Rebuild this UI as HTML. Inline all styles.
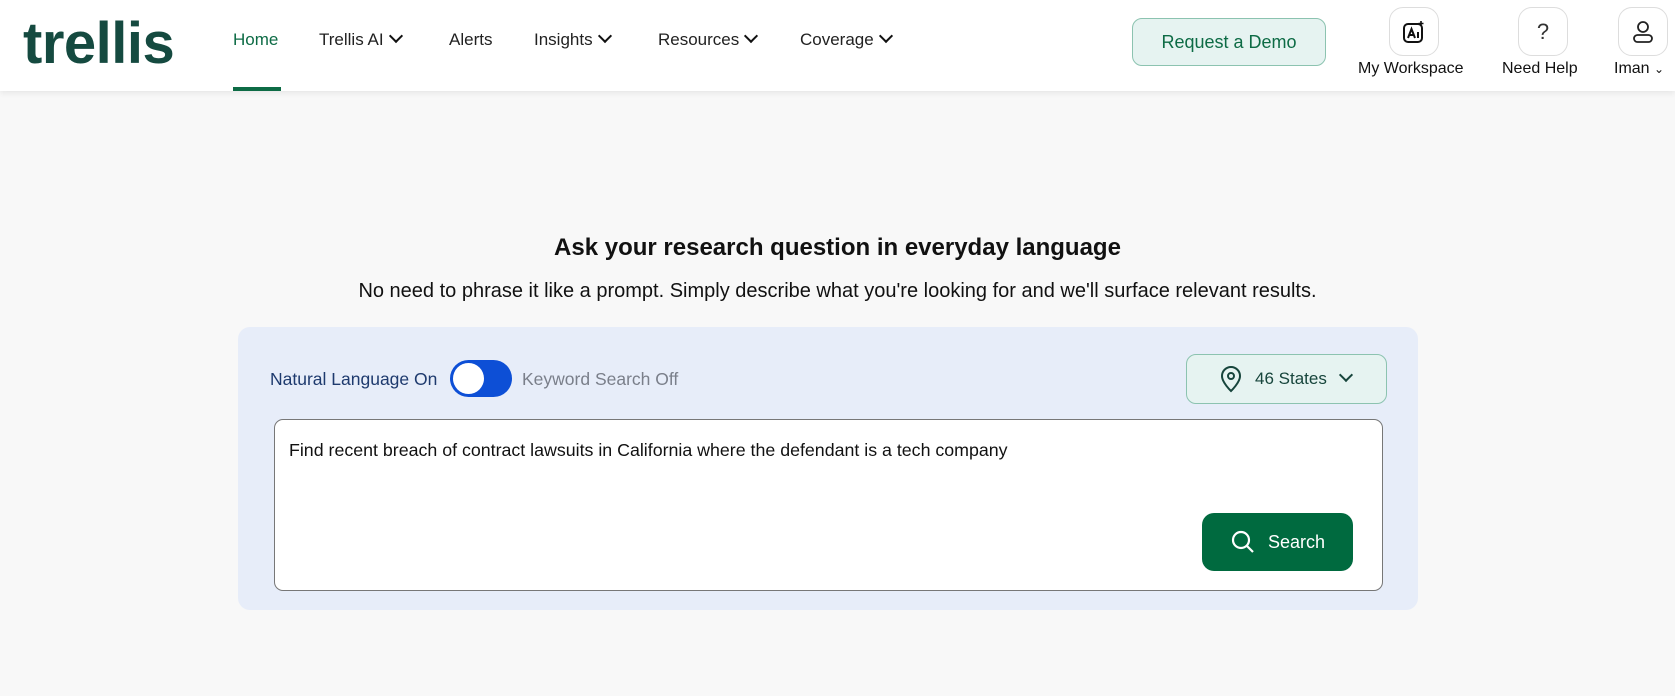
<!DOCTYPE html>
<html><head><meta charset="utf-8"><style>
*{box-sizing:border-box;margin:0;padding:0}
body{width:1675px;height:696px;background:#f8f8f8;font-family:"Liberation Sans",sans-serif;position:relative;overflow:hidden;color:#111}
.hdr{position:absolute;left:0;top:0;width:1675px;height:91px;background:#fff;box-shadow:0 2px 6px rgba(0,0,0,.08)}
.a{position:absolute}
.logo{left:23px;top:10px;font-size:58px;font-weight:bold;color:#154a40;letter-spacing:-0.5px}
.nav{top:30px;font-size:17px;color:#222}
.chev{display:inline-block;width:10px;height:10px;border-right:2px solid #111;border-bottom:2px solid #111;transform:rotate(45deg);margin-left:7px;position:relative;top:-4px}
.demo{left:1132px;top:18px;width:194px;height:48px;border:1px solid #8cc3b0;background:#e6f3f1;border-radius:10px;color:#0d6b45;font-size:18px;text-align:center;line-height:46px}
.ic{width:50px;height:49px;border:1px solid #ddd;border-radius:14px;background:#fff;display:flex;align-items:center;justify-content:center}
.lbl{top:60px;font-size:16px;color:#111}
.panel{left:238px;top:327px;width:1180px;height:283px;background:#e7edf9;border-radius:12px}
</style></head><body>
<div class="hdr">
<div class="a logo">trellis</div>
<div class="a nav" style="left:233px;color:#0d6b45">Home</div>
<div class="a" style="left:233px;top:87px;width:48px;height:4px;background:#0d6b45"></div>
<div class="a nav" style="left:319px">Trellis AI<span class="chev"></span></div>
<div class="a nav" style="left:449px">Alerts</div>
<div class="a nav" style="left:534px">Insights<span class="chev"></span></div>
<div class="a nav" style="left:658px">Resources<span class="chev"></span></div>
<div class="a nav" style="left:800px">Coverage<span class="chev"></span></div>
<div class="a demo">Request a Demo</div>
<div class="a ic" style="left:1389px;top:7px"><svg width="26" height="26" viewBox="0 0 26 26" fill="none" stroke="#111" stroke-width="2"><rect x="3" y="5" width="18" height="18" rx="4"/><path d="M7 19l3.5-9 3.5 9M8.3 16h4.4M17 13v6" /><path d="M20 2v5M17.5 4.5h5" stroke-width="1.6"/></svg></div>
<div class="a ic" style="left:1518px;top:7px;font-size:22px;color:#333">?</div>
<div class="a ic" style="left:1618px;top:7px"><svg width="24" height="26" viewBox="0 0 24 26" fill="none" stroke="#222" stroke-width="1.8"><circle cx="12" cy="8" r="5"/><rect x="3" y="16" width="18" height="7" rx="3.5"/></svg></div>
<div class="a lbl" style="left:1358px">My Workspace</div>
<div class="a lbl" style="left:1502px">Need Help</div>
<div class="a lbl" style="left:1614px">Iman <span style="font-size:12px">&#8964;</span></div>
</div>
<div class="a" style="left:0;width:1675px;top:234px;text-align:center;font-size:24px;font-weight:bold;color:#111">Ask your research question in everyday language</div>
<div class="a" style="left:0;width:1675px;top:280px;text-align:center;font-size:20px;color:#111">No need to phrase it like a prompt. Simply describe what you're looking for and we'll surface relevant results.</div>
<div class="a panel"></div>
<div class="a" style="left:270px;top:369px;font-size:17.5px;color:#1e3a6e">Natural Language On</div>
<div class="a" style="left:450px;top:360px;width:62px;height:37px;border-radius:19px;background:#0d4fd6"><div style="position:absolute;left:3px;top:3px;width:31px;height:31px;border-radius:50%;background:#fff"></div></div>
<div class="a" style="left:522px;top:369px;font-size:17.5px;color:#7a7f8a">Keyword Search Off</div>
<div class="a" style="left:1186px;top:354px;width:201px;height:50px;border:1px solid #8cc3b0;background:#e6f3f1;border-radius:10px;display:flex;align-items:center;padding-left:32px;font-size:17px;color:#17453c">
<svg width="24" height="28" viewBox="0 0 24 28" fill="none" stroke="#17453c" stroke-width="2"><path d="M12 26s9-8.5 9-15a9 9 0 0 0-18 0c0 6.5 9 15 9 15z"/><circle cx="12" cy="11" r="3"/></svg>
<span style="margin-left:12px">46 States</span><span class="chev" style="border-color:#17453c;margin-left:14px"></span></div>
<div class="a" style="left:274px;top:419px;width:1109px;height:172px;background:#fff;border:1.5px solid #777;border-radius:9px"></div>
<div class="a" style="left:289px;top:440px;font-size:17.8px;color:#111">Find recent breach of contract lawsuits in California where the defendant is a tech company</div>
<div class="a" style="left:1202px;top:513px;width:151px;height:58px;background:#006a3f;border-radius:12px;display:flex;align-items:center;justify-content:center;color:#fff;font-size:18px">
<svg width="26" height="26" viewBox="0 0 26 26" fill="none" stroke="#fff" stroke-width="2.2"><circle cx="11" cy="11" r="8"/><path d="M17 17l6 6"/></svg><span style="margin-left:12px">Search</span></div>
</body></html>
